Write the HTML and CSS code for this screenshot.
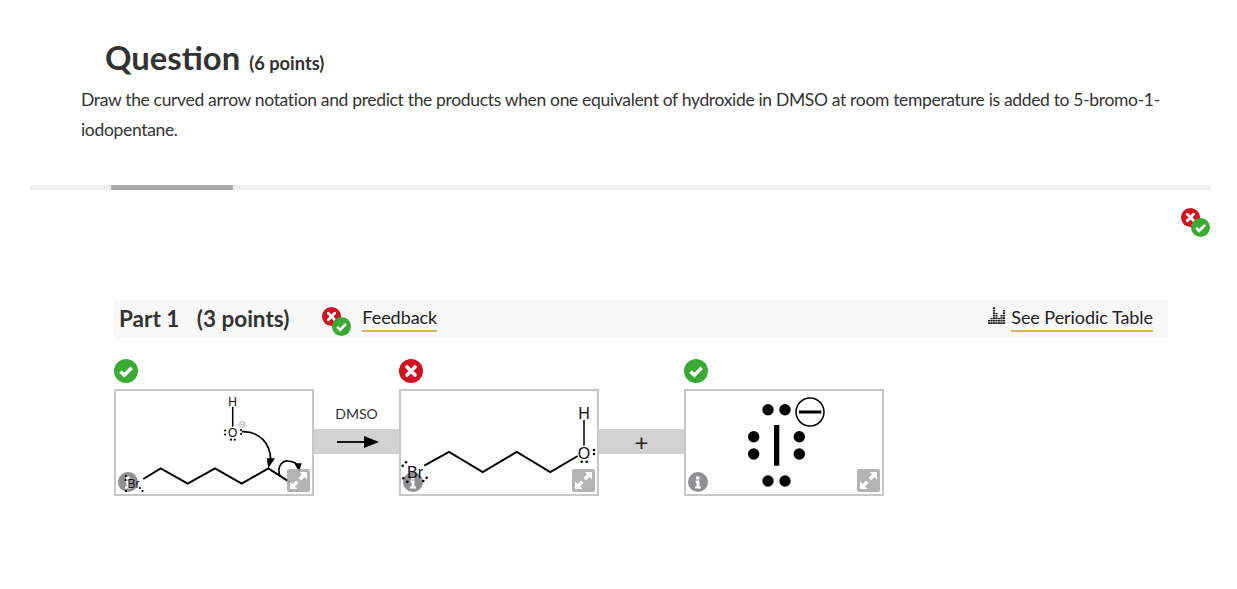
FILE: index.html
```html
<!DOCTYPE html>
<html lang="en">
<head>
<meta charset="utf-8">
<title>Question</title>
<link rel="stylesheet" href="styles.css">
</head>
<body>
<svg class="defs" width="0" height="0" aria-hidden="true">
  <symbol id="ok" viewBox="0 0 24 24">
    <circle cx="12" cy="12" r="12" fill="#3aaa35"/>
    <path d="M6.500 12.500l3.800 3.800 7.400-7.600" fill="none" stroke="#fff" stroke-width="3.400"/>
  </symbol>
  <symbol id="bad" viewBox="0 0 24 24">
    <circle cx="12" cy="12" r="12" fill="#d0111f"/>
    <path d="M8 8l8 8M16 8l-8 8" fill="none" stroke="#fff" stroke-width="3.600" stroke-linecap="round"/>
  </symbol>
  <symbol id="expand" viewBox="0 0 23 23">
    <rect width="23" height="23" rx="2" fill="#aaa" fill-opacity=".88"/>
    <path d="M12.500 3h7.500v7.500l-2.500-2.500-3.500 3.500-2.500-2.500 3.500-3.500zM10.500 20h-7.500v-7.500l2.500 2.500 3.500-3.500 2.500 2.500-3.500 3.500z" fill="#fff"/>
  </symbol>
  <symbol id="info" viewBox="0 0 20 20">
    <circle cx="10" cy="10" r="10" fill="#8e8e93"/>
    <path d="M8 4.500h3.500v3H8zM7.500 8.500h4v6h1.500v2H7v-2h1.500v-4h-1z" fill="#fff"/>
  </symbol>
</svg>

<header class="question">
  <h1 class="question-title">Question <small class="question-points">(6 points)</small></h1>
  <p class="question-text">Draw the curved arrow notation and predict the products when one equivalent of hydroxide in DMSO at room temperature is added to 5-bromo-1-iodopentane.</p>
</header>

<div class="progress"><div class="progress-thumb"></div></div>

<div class="summary">
  <span class="pair">
    <svg class="pair-bad"><use href="#bad"/></svg>
    <svg class="pair-ok"><use href="#ok"/></svg>
  </span>
</div>

<section class="part">
  <div class="part-bar">
    <h2 class="part-title">Part 1 <span class="part-points">(3 points)</span></h2>
    <span class="pair pair-bar">
      <svg class="pair-bad"><use href="#bad"/></svg>
      <svg class="pair-ok"><use href="#ok"/></svg>
    </span>
    <a class="link">Feedback</a>
    <span class="periodic">
      <svg class="periodic-icon" viewBox="0 0 18 17">
        <path d="M1 17V13M3.500 17V11M6 17V0M8.500 17V6M11 17V11M13.500 17V8M16 17V3" fill="none" stroke="#222" stroke-width="2.200" stroke-dasharray="1.700 .8"/>
      </svg>
      <a class="link">See Periodic Table</a>
    </span>
  </div>

  <div class="scheme">
    <div class="item">
      <svg class="badge"><use href="#ok"/></svg>
      <div class="card">
        <svg class="card-info"><use href="#info"/></svg>
        <svg class="mol" viewBox="0 0 196 103">
          <polyline class="bond" points="27.300,88 44.700,77.300 71.700,92.700 99,77.300 125.700,92.700 152.300,77.300 175.700,92.300"/>
          <line class="thin" x1="116.700" y1="15.700" x2="116.700" y2="35.700"/>
          <text class="atom" x="116.700" y="15">H</text>
          <text class="atom" x="116.700" y="46">O</text>
          <text class="atom" x="17.500" y="97">Br</text>
          <g class="dots">
            <circle cx="109" cy="39.500" r="1.100"/><circle cx="109" cy="43.500" r="1.100"/>
            <circle cx="115" cy="48.700" r="1.100"/><circle cx="118.700" cy="48.700" r="1.100"/>
            <circle cx="125" cy="39" r="1.100"/><circle cx="125" cy="43" r="1.100"/>
            <circle cx="10" cy="85" r="1.100"/><circle cx="9.500" cy="89" r="1.100"/>
            <circle cx="10" cy="100" r="1.100"/><circle cx="24" cy="97" r="1.100"/><circle cx="26.500" cy="100" r="1.100"/>
            <circle cx="175" cy="100" r="1.100"/><circle cx="181" cy="100" r="1.100"/>
          </g>
          <circle class="charge" cx="126.300" cy="33.300" r="2.800"/>
          <line class="charge" x1="124.500" y1="33.300" x2="128.100" y2="33.300"/>
          <path class="curve" d="M125.700 40.700C143 40 155 52 154.700 70"/>
          <polygon points="150.700,67.300 159,67.300 152.300,77.300"/>
          <path class="curve" d="M164 85.700C160 74 168 69 172.300 70C177 70.500 181 72 182.300 76"/>
          <polygon points="178.300,72.300 185.700,72.300 183,80.700"/>
        </svg>
        <svg class="card-expand"><use href="#expand"/></svg>
      </div>
    </div>

    <div class="link-col">
      <span class="link-label">DMSO</span>
      <div class="band">
        <svg class="arrow" viewBox="0 0 42 12">
          <path d="M0 6h28" stroke="#000" stroke-width="1.800"/>
          <polygon points="27,0 42,6 27,12"/>
        </svg>
      </div>
    </div>

    <div class="item">
      <svg class="badge"><use href="#bad"/></svg>
      <div class="card">
        <svg class="card-info"><use href="#info"/></svg>
        <svg class="mol" viewBox="0 0 196 103">
          <polyline class="bond" points="23.300,74.700 48,61 81.700,81 115.700,61 149.300,81 176.700,65"/>
          <line class="thin" x1="183" y1="29" x2="183" y2="54.700"/>
          <text class="atom atom-lg" x="183" y="28">H</text>
          <text class="atom atom-lg" x="183" y="67.500">O</text>
          <text class="atom atom-lg" x="14" y="87">Br</text>
          <g class="dots">
            <circle cx="193" cy="59" r="1.300"/><circle cx="193" cy="63" r="1.300"/>
            <circle cx="180.700" cy="70.700" r="1.300"/><circle cx="185.700" cy="70.700" r="1.300"/>
            <circle cx="1.700" cy="74.700" r="1.300"/><circle cx="5" cy="71.300" r="1.300"/>
            <circle cx="2.300" cy="87.300" r="1.300"/><circle cx="6.300" cy="90.700" r="1.300"/>
            <circle cx="22.300" cy="90" r="1.300"/><circle cx="25.700" cy="86.700" r="1.300"/>
          </g>
        </svg>
        <svg class="card-expand"><use href="#expand"/></svg>
      </div>
    </div>

    <div class="link-col">
      <span class="link-label"></span>
      <div class="band"><span class="plus">+</span></div>
    </div>

    <div class="item">
      <svg class="badge"><use href="#ok"/></svg>
      <div class="card">
        <svg class="card-info"><use href="#info"/></svg>
        <svg class="mol" viewBox="0 0 196 103">
          <rect x="88" y="34" width="5.300" height="40.700"/>
          <circle cx="82" cy="18.700" r="5.700"/><circle cx="99" cy="18.700" r="5.700"/>
          <circle cx="67.700" cy="45.700" r="5.700"/><circle cx="67.700" cy="63" r="5.700"/>
          <circle cx="113.300" cy="45.700" r="5.700"/><circle cx="113.300" cy="63" r="5.700"/>
          <circle cx="82" cy="90" r="5.700"/><circle cx="99" cy="90" r="5.700"/>
          <circle class="ion" cx="124" cy="21" r="14"/>
          <line class="ion-line" x1="113" y1="21" x2="135.300" y2="21"/>
        </svg>
        <svg class="card-expand"><use href="#expand"/></svg>
      </div>
    </div>
  </div>
</section>
</body>
</html>
```

FILE: styles.css
```css
* { box-sizing: border-box; }

body {
  margin: 0;
  background: #fff;
  color: #333;
  font-family: Lato, "Open Sans", sans-serif;
}

.defs { display: block; height: 0; }

.question { padding: 38px 70px 0 81px; }

.question-title {
  margin: 0 0 0 24px;
  font-size: 32.800px;
  line-height: 40px;
  font-weight: 700;
}

.question-points {
  margin-left: 1px;
  font-size: 18.300px;
  font-weight: 700;
}

.question-text {
  margin: 2px 0 0;
  font-size: 17.500px;
  letter-spacing: -.335px;
  line-height: 30px;
  color: #333;
}

.progress {
  height: 5px;
  margin: 40px 26px 0 30px;
  background: #eee;
}

.progress-thumb {
  width: 122px;
  height: 5px;
  margin-left: 81px;
  background: #aaa;
}

.summary {
  display: flex;
  justify-content: flex-end;
  height: 110px;
  padding: 18px 27px 0 0;
}

.pair {
  position: relative;
  display: block;
  width: 29px;
  height: 29px;
}

.pair svg { position: absolute; width: 19px; height: 19px; }
.pair-bad { left: 0; top: 0; }
.pair-ok { left: 10px; top: 10px; }

.part { padding: 0 69px 0 114px; }

.part-bar {
  display: flex;
  align-items: center;
  height: 38px;
  padding: 0 15px 0 5px;
  background: #f8f8f8;
}

.part-title {
  margin: 0;
  font-size: 22.500px;
  line-height: 30px;
  font-weight: 700;
  white-space: pre;
}

.part-points { margin-left: 12px; }

.pair-bar { margin-left: 33px; margin-top: 5px; }

.link {
  display: block;
  margin-left: 11px;
  margin-top: -1px;
  padding-bottom: 1px;
  border-bottom: 2px solid #e0b55f;
  font-size: 18px;
  letter-spacing: -.05px;
  line-height: 24px;
  color: #222;
}

.periodic {
  display: flex;
  align-items: flex-start;
  margin-left: auto;
}

.periodic-icon { width: 18px; height: 17px; margin-top: 1px; }
.periodic .link { margin-left: 5px; }

.scheme {
  display: flex;
  align-items: flex-end;
  margin-top: 21px;
}

.item { display: flex; flex-direction: column; }

.badge {
  display: block;
  width: 24px;
  height: 24px;
  margin-bottom: 6px;
}

.card {
  position: relative;
  width: 200px;
  height: 107px;
  border: 2px solid #c8c8c8;
  background: #fff;
}

.mol {
  position: relative;
  display: block;
  width: 196px;
  height: 103px;
}

.card-info {
  position: absolute;
  left: 2px;
  top: 81px;
  width: 20px;
  height: 20px;
}

.card-expand {
  position: absolute;
  right: 2px;
  top: 78px;
  width: 23px;
  height: 23px;
}

.bond { fill: none; stroke: #000; stroke-width: 2; }
.thin { stroke: #000; stroke-width: 1.500; }
.atom { font-family: "Liberation Sans", sans-serif; font-size: 12px; text-anchor: middle; fill: #111; }
.atom-lg { font-size: 16px; }
.charge { fill: none; stroke: #888; stroke-width: .7; }
.curve { fill: none; stroke: #000; stroke-width: 1.700; }
.ion { fill: #fff; stroke: #000; stroke-width: 1.500; }
.ion-line { stroke: #000; stroke-width: 3; }

.link-col {
  display: flex;
  flex-direction: column;
  width: 85px;
  height: 107px;
  padding-top: 17px;
}

.link-label {
  height: 16px;
  margin-bottom: 7px;
  font-size: 14px;
  line-height: 16px;
  text-align: center;
  color: #333;
}

.band {
  display: flex;
  align-items: center;
  justify-content: center;
  height: 25px;
  background: #d2d2d2;
}

.arrow { width: 42px; height: 12px; margin-left: 3px; }

.plus {
  font-size: 24px;
  line-height: 25px;
  color: #222;
}
```
